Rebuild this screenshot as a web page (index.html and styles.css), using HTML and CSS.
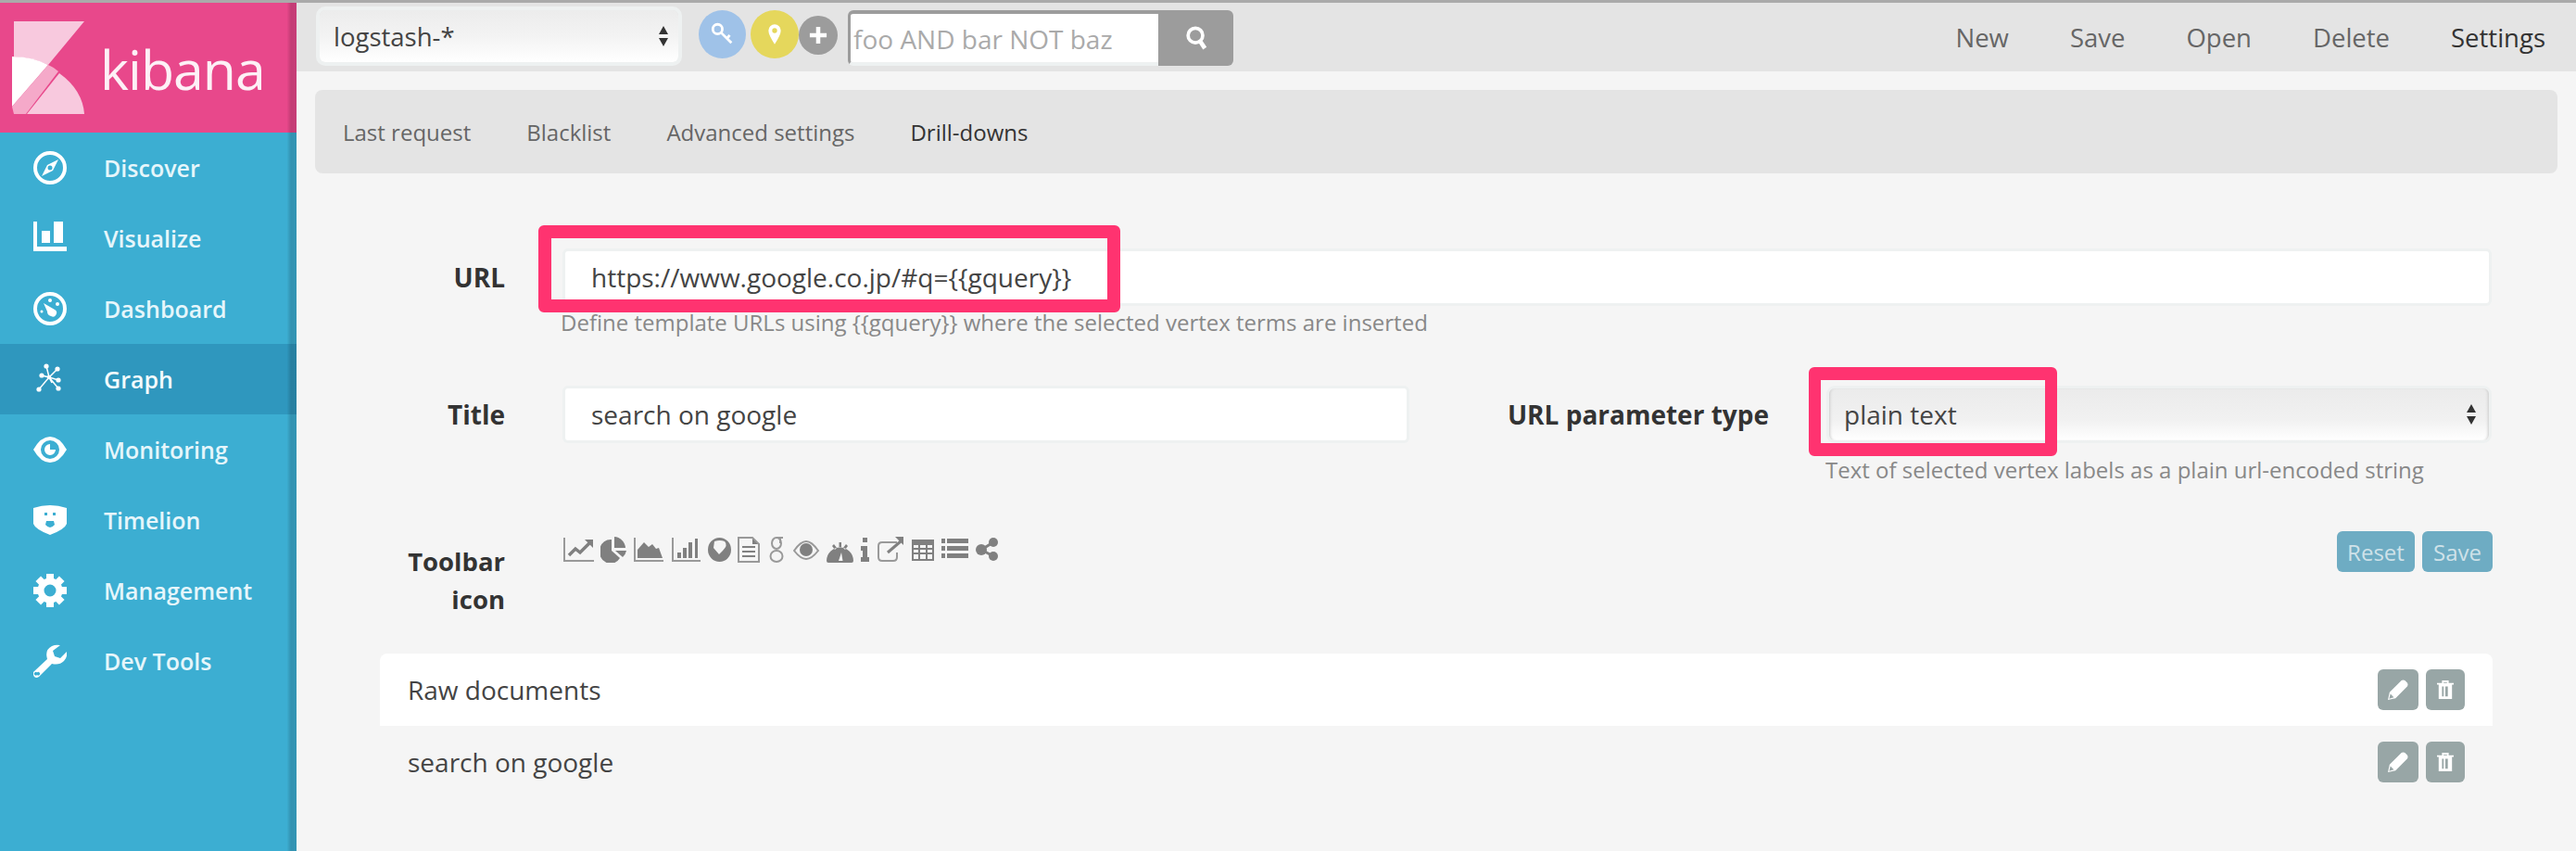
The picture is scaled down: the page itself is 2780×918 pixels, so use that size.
FILE: index.html
```html
<!DOCTYPE html>
<html lang="en">
<head>
<meta charset="utf-8">
<title>Kibana Graph</title>
<link rel="stylesheet" href="styles.css">
</head>
<body>
<div class="app">
  <aside class="sidebar">
    <div class="brand">
      <svg class="brand-logo" width="78" height="102" viewBox="0 0 78 102">
        <path fill="#f8c9de" d="M2 0H78L39 47Q22 39 2 38Z"/>
        <path fill="#fff" d="M0 38Q22 38 39 47L0 92Z"/>
        <path fill="#f5a9c9" d="M0 92L39 47Q46 50 50 54L15 100H2Z"/>
        <path fill="#f8c9de" d="M16 100L51 56Q76 74 78 100Z"/>
      </svg>
      <span class="brand-name">kibana</span>
    </div>
    <nav class="side-nav">
      <a class="side-item">
        <svg class="side-icon" viewBox="0 0 36 36"><circle cx="18" cy="18" r="16" fill="none" stroke="#fff" stroke-width="4"/><path fill="#fff" d="M27 9L21 21L9 27L15 15ZM18 15.500A2.500 2.500 0 1 0 18 20.500A2.500 2.500 0 1 0 18 15.500Z" fill-rule="evenodd"/></svg>
        <span>Discover</span>
      </a>
      <a class="side-item">
        <svg class="side-icon" viewBox="0 0 36 36"><path fill="#fff" d="M0 0H4V27H36V32H0Z"/><rect fill="#fff" x="9" y="10" width="9" height="13"/><rect fill="#fff" x="22" y="0" width="10" height="23"/></svg>
        <span>Visualize</span>
      </a>
      <a class="side-item">
        <svg class="side-icon" viewBox="0 0 36 36"><circle cx="18" cy="18" r="16" fill="none" stroke="#fff" stroke-width="4"/><path fill="#fff" d="M11 12L23 19A4 4 0 0 1 19 26A5 5 0 0 1 15 21Z"/><circle cx="18" cy="9" r="2" fill="#fff"/><circle cx="26" cy="13" r="2" fill="#fff"/><circle cx="9" cy="21" r="1.500" fill="#fff"/></svg>
        <span>Dashboard</span>
      </a>
      <a class="side-item is-active">
        <svg class="side-icon" viewBox="0 0 36 36"><g stroke="#fff" stroke-width="1.500" fill="none"><path d="M14 4L17 16L27 19M26 7L17 16L27 28M9 14L17 16L6 29M17 16L20 22"/></g><g fill="#fff"><circle cx="14" cy="4" r="2.600"/><circle cx="26" cy="7" r="2.600"/><circle cx="9" cy="14" r="2.600"/><circle cx="27" cy="19" r="2.600"/><circle cx="17" cy="16" r="2.200"/><circle cx="6" cy="29" r="2.600"/><circle cx="27" cy="28" r="2.600"/></g></svg>
        <span>Graph</span>
      </a>
      <a class="side-item">
        <svg class="side-icon" viewBox="0 0 36 36"><path fill="#fff" fill-rule="evenodd" d="M0 18Q8 4 18 4T36 18Q28 32 18 32T0 18ZM18 8A10 10 0 1 0 18 28A10 10 0 1 0 18 8Z"/><path fill="#fff" d="M18 12A6 6 0 1 0 24 18H18Z"/></svg>
        <span>Monitoring</span>
      </a>
      <a class="side-item">
        <svg class="side-icon" viewBox="0 0 36 36"><path fill="#fff" fill-rule="evenodd" d="M0 5Q18 -1 36 5V22Q34 28 18 34Q2 28 0 22ZM12 10H15V13H12ZM21 10H24V13H21ZM14 19H22L23 23Q18 29 13 23Z"/></svg>
        <span>Timelion</span>
      </a>
      <a class="side-item">
        <svg class="side-icon" viewBox="0 0 36 36"><circle cx="18" cy="18" r="10" fill="none" stroke="#fff" stroke-width="7"/><g fill="#fff"><rect x="14" y="0" width="8" height="7"/><rect x="14" y="29" width="8" height="7"/><rect x="0" y="14" width="7" height="8"/><rect x="29" y="14" width="7" height="8"/><rect x="14" y="0" width="8" height="7" transform="rotate(45 18 18)"/><rect x="14" y="29" width="8" height="7" transform="rotate(45 18 18)"/><rect x="0" y="14" width="7" height="8" transform="rotate(45 18 18)"/><rect x="29" y="14" width="7" height="8" transform="rotate(45 18 18)"/></g></svg>
        <span>Management</span>
      </a>
      <a class="side-item">
        <svg class="side-icon" viewBox="0 0 36 36"><path fill="#fff" fill-rule="evenodd" d="M0 30L15 16Q12 6 20 2Q24 0 29 1L21 7L23 13L29 15L36 8Q37 14 33 18Q28 23 20 21L6 35Q3 37 1 35Q-1 32 0 30ZM4 30.500A1.800 1.800 0 1 0 4 33A1.800 1.800 0 1 0 4 30.500Z"/></svg>
        <span>Dev Tools</span>
      </a>
    </nav>
  </aside>
  <main class="main">
    <header class="topbar">
      <div class="index-select">
        <span>logstash-*</span>
        <svg class="updown" width="12" height="24" viewBox="0 0 12 24"><path fill="#333" d="M6 1L11 10H1ZM6 23L1 14H11Z"/></svg>
      </div>
      <span class="round round-blue">
        <svg width="28" height="28" viewBox="0 0 30 30"><g fill="none" stroke="#fff" stroke-width="3"><circle cx="9" cy="9" r="5.500"/><path d="M13 13L25 25M20 20L23 16"/></g></svg>
      </span>
      <span class="round round-yellow">
        <svg width="16" height="24" viewBox="0 0 24 34"><path fill="#fff" fill-rule="evenodd" d="M12 1A10 10 0 0 1 22 11Q22 18 12 33Q2 18 2 11A10 10 0 0 1 12 1ZM12 7A4 4 0 1 0 12 15A4 4 0 1 0 12 7Z"/></svg>
      </span>
      <span class="round round-gray">
        <svg width="20" height="20" viewBox="0 0 22 22"><path fill="#fff" d="M8.500 1H13.500V8.500H21V13.500H13.500V21H8.500V13.500H1V8.500H8.500Z"/></svg>
      </span>
      <div class="search">
        <div class="search-input">foo AND bar NOT baz</div>
        <div class="search-btn">
          <svg width="28" height="26" viewBox="0 0 26 28"><circle cx="12" cy="11" r="8.500" fill="none" stroke="#fff" stroke-width="4"/><path d="M17 17L23 26" stroke="#fff" stroke-width="5"/></svg>
        </div>
      </div>
      <div class="top-actions">
        <a>New</a><a>Save</a><a>Open</a><a>Delete</a><a class="is-current">Settings</a>
      </div>
    </header>
    <div class="subnav">
      <a>Last request</a><a>Blacklist</a><a>Advanced settings</a><a class="is-current">Drill-downs</a>
    </div>
    <section class="form">
      <div class="row row-url">
        <label class="label">URL</label>
        <div class="field-wrap">
          <div class="control control-url">
            <span>https://www.google.co.jp/#q={{gquery}}</span>
            <i class="mark mark-url"></i>
          </div>
          <p class="help">Define template URLs using {{gquery}} where the selected vertex terms are inserted</p>
        </div>
      </div>
      <div class="row row-title">
        <label class="label">Title</label>
        <div class="control control-title"><span>search on google</span></div>
        <label class="label label-param">URL parameter type</label>
        <div class="field-wrap">
          <div class="select-box">
            <span>plain text</span>
            <svg class="updown" width="12" height="24" viewBox="0 0 12 24"><path fill="#333" d="M6 1L11 10H1ZM6 23L1 14H11Z"/></svg>
            <i class="mark mark-select"></i>
          </div>
          <p class="help help-select">Text of selected vertex labels as a plain url-encoded string</p>
        </div>
      </div>
      <div class="row row-toolbar">
        <label class="label label-toolbar">Toolbar icon</label>
        <div class="tool-icons">
          <svg width="40" height="28" viewBox="0 0 40 28"><path fill="none" stroke="#999" stroke-width="2" d="M1 1V26H33"/><path fill="none" stroke="#808080" stroke-width="3.500" d="M6 20L13 13L18 17L28 7"/><path fill="#808080" d="M23 3H32V12Z"/></svg>
          <svg width="36" height="28" viewBox="0 0 36 28"><path fill="#808080" d="M12 3V15L21 23A12 13 0 1 1 12 3Z"/><path fill="#808080" d="M15 0A13 13 0 0 1 27 12H15Z"/><path fill="#808080" d="M16 15H28A13 13 0 0 1 24 22Z"/></svg>
          <svg width="41" height="28" viewBox="0 0 41 28"><path fill="none" stroke="#999" stroke-width="2" d="M1 1V26H32"/><path fill="#808080" d="M4 23V14L11 6L16 11L20 8L24 13L27 12L31 23Z"/></svg>
          <svg width="39" height="28" viewBox="0 0 39 28"><path fill="none" stroke="#999" stroke-width="2" d="M1 1V26H31"/><path fill="#808080" d="M6 17H10V23H6ZM12 12H16V23H12ZM18 6H22V23H18ZM25 2H28V23H25Z"/></svg>
          <svg width="32" height="28" viewBox="0 0 32 28"><path fill="#808080" fill-rule="evenodd" d="M12.500 1A12.500 13 0 1 0 12.500 27A12.500 13 0 1 0 12.500 1ZM7 5Q13 3 18 5Q22 9 16 15L12 19L6 12Z"/></svg>
          <svg width="34" height="28" viewBox="0 0 34 28"><path fill="none" stroke="#999" stroke-width="2" d="M1 1H16L23 8V27H1Z"/><path fill="#808080" d="M5 10H19V12H5ZM5 15H19V17H5ZM5 20H19V22H5ZM16 2V8H22Z"/></svg>
          <svg width="26" height="28" viewBox="0 0 26 28"><g fill="none" stroke="#999" stroke-width="2"><ellipse cx="8" cy="7" rx="5" ry="6"/><ellipse cx="8" cy="21" rx="6.500" ry="6"/><path d="M8 1H15M12 1V7"/></g></svg>
          <svg width="36" height="28" viewBox="0 0 36 28"><path fill="none" stroke="#999" stroke-width="2" d="M1 15Q8 5 14 5T27 15Q20 24 14 24T1 15Z"/><circle cx="14" cy="14" r="7" fill="#808080"/></svg>
          <svg width="37" height="28" viewBox="0 0 37 28"><path fill="#808080" fill-rule="evenodd" d="M0 26A14.500 14.500 0 1 1 29 26Q29 28 27 28H2Q0 28 0 26ZM13.500 6H16V12H13.500ZM6 10L8 8L11 12L9 14ZM21 8L23 10L20 14L18 12ZM13 26L16 17L17.500 26Z"/></svg>
          <svg width="18" height="28" viewBox="0 0 18 28"><path fill="#808080" d="M2 1H7V6H2ZM0 10H7V22H9V27H0V22H2V15H0Z"/></svg>
          <svg width="36" height="28" viewBox="0 0 36 28"><path fill="none" stroke="#999" stroke-width="2" d="M21 6H5Q1 6 1 10V22Q1 26 5 26H17Q21 26 21 22V17"/><path fill="none" stroke="#808080" stroke-width="3" d="M11 17L25 5"/><path fill="#808080" d="M19 0H28V9Z"/></svg>
          <svg width="33" height="28" viewBox="0 0 33 28"><path fill="#808080" fill-rule="evenodd" d="M1 3H25V26H1ZM3 9V12H8V9ZM10 9V12H16V9ZM18 9V12H23V9ZM3 14V17H8V14ZM10 14V17H16V14ZM18 14V17H23V14ZM3 19V24H8V19ZM10 19V24H16V19ZM18 19V24H23V19Z"/></svg>
          <svg width="37" height="28" viewBox="0 0 37 28"><path fill="#808080" d="M0 2H4V7H0ZM6 2H29V7H6ZM0 10H4V15H0ZM6 10H29V15H6ZM0 18H4V23H0ZM6 18H29V23H6Z"/></svg>
          <svg width="24" height="28" viewBox="0 0 24 28"><g fill="#808080"><circle cx="19" cy="6" r="5"/><circle cx="19" cy="21" r="5"/><circle cx="6" cy="14" r="6"/></g><path stroke="#808080" stroke-width="3" d="M6 14L19 6M6 14L19 21"/></svg>
        </div>
        <div class="form-actions">
          <a class="btn btn-reset">Reset</a>
          <a class="btn btn-save">Save</a>
        </div>
      </div>
      <ul class="drill-list">
        <li class="drill-row is-selected">
          <span>Raw documents</span>
          <div class="drill-tools">
            <a class="tool-btn tool-edit"><svg width="22" height="22" viewBox="0 0 24 24"><path fill="#fff" fill-rule="evenodd" d="M0 24L2 15L16 1Q18 0 20 1L23 4Q24 6 23 8L9 22ZM3 17L1.500 22.500L7 21Z"/></svg></a>
            <a class="tool-btn tool-trash"><svg width="18" height="22" viewBox="0 0 20 24"><path fill="#fff" fill-rule="evenodd" d="M0 4H6V1H14V4H20V6H18V23H2V6H0ZM8 3V4H12V3ZM6 8V20H8V8ZM10 8V20H13V8Z"/></svg></a>
          </div>
        </li>
        <li class="drill-row">
          <span>search on google</span>
          <div class="drill-tools">
            <a class="tool-btn tool-edit"><svg width="22" height="22" viewBox="0 0 24 24"><path fill="#fff" fill-rule="evenodd" d="M0 24L2 15L16 1Q18 0 20 1L23 4Q24 6 23 8L9 22ZM3 17L1.500 22.500L7 21Z"/></svg></a>
            <a class="tool-btn tool-trash"><svg width="18" height="22" viewBox="0 0 20 24"><path fill="#fff" fill-rule="evenodd" d="M0 4H6V1H14V4H20V6H18V23H2V6H0ZM8 3V4H12V3ZM6 8V20H8V8ZM10 8V20H13V8Z"/></svg></a>
          </div>
        </li>
      </ul>
    </section>
  </main>
</div>
</body>
</html>
```
FILE: styles.css
```css
* { box-sizing: border-box; }
html, body { margin: 0; height: 100%; }
body {
  height: 918px;
  overflow: hidden;
  border-top: 3px solid #aaaaaa;
  background: #f5f5f5;
  color: #444;
  font-family: "Open Sans", "Liberation Sans", sans-serif;
  font-size: 28px;
}
.app { display: flex; height: 915px; }

/* sidebar */
.sidebar {
  position: relative;
  flex: 0 0 320px;
  background: #3caed2;
}
.sidebar::after {
  content: "";
  position: absolute;
  top: 0; right: 0; bottom: 0;
  width: 10px;
  background: linear-gradient(to right, rgba(0,0,0,.02), rgba(0,0,0,.16) 40%, rgba(0,0,0,.14));
}
.brand {
  display: flex;
  align-items: flex-start;
  height: 140px;
  padding: 20px 0 0 13px;
  background: #e8488b;
}
.brand-name {
  margin: 18px 0 0 17px;
  color: #fdf0f6;
  font-size: 59px;
  font-weight: 500;
  line-height: 66px;
  letter-spacing: -1px;
}
.side-item {
  display: flex;
  align-items: center;
  height: 76px;
  padding-left: 36px;
  color: #e6f6fb;
  font-size: 25px;
  font-weight: 600;
}
.side-item.is-active { background: #2f97be; color: #f4fbfd; }
.side-icon { width: 36px; height: 36px; margin-right: 40px; flex: none; }

/* top bar */
.main { flex: 1; min-width: 0; }
.topbar {
  display: flex;
  align-items: flex-start;
  height: 74px;
  padding-top: 8px;
  background: #e4e4e4;
}
.index-select {
  display: flex;
  align-items: center;
  justify-content: space-between;
  width: 387px;
  height: 56px;
  margin-left: 25px;
  padding: 0 10px 0 15px;
  border-radius: 6px;
  background: linear-gradient(to bottom, #ececec, #f3f3f3 50%, #fff);
  box-shadow: 0 0 0 4px #eef1f1;
  font-size: 27.500px;
  color: #444;
}
.round {
  display: flex;
  align-items: center;
  justify-content: center;
  flex: none;
  border-radius: 50%;
}
.round-blue { width: 51px; height: 52px; margin-left: 22px; background: #9fc2e8; }
.round-yellow { width: 52px; height: 52px; margin-left: 5px; background: #e5d75c; }
.round-gray { width: 42px; height: 42px; margin-top: 6px; background: #9c9c9c; }
.search { display: flex; height: 60px; margin-left: 11px; }
.search-input {
  width: 335px;
  padding-left: 3px;
  border-top: 4px solid #9c9c9c;
  border-left: 3px solid #9c9c9c;
  border-bottom: 4px solid #eef1f1;
  border-radius: 6px 0 0 6px;
  background: #fff;
  color: #aaa;
  line-height: 54px;
  white-space: nowrap;
}
.search-btn {
  display: flex;
  align-items: center;
  justify-content: center;
  width: 81px;
  border-radius: 0 6px 6px 0;
  background: #9c9c9c;
}
.top-actions {
  display: flex;
  gap: 66px;
  margin-left: auto;
  padding-right: 33px;
  font-size: 27.500px;
  line-height: 60px;
  color: #666;
}
.top-actions .is-current { color: #333; }

/* sub navigation */
.subnav {
  display: flex;
  align-items: center;
  gap: 60px;
  height: 90px;
  margin: 20px 20px 0;
  padding-left: 30px;
  border-radius: 8px;
  background: #e4e4e4;
  color: #666;
  font-size: 24px;
}
.subnav .is-current { color: #333; }

/* form */
.form { padding: 84px 90px 0 80px; }
.row { display: flex; }
.label {
  flex: 0 0 145px;
  margin-right: 65px;
  text-align: right;
  font-weight: 700;
  color: #333;
  font-size: 28px;
  line-height: 56px;
}
.field-wrap { flex: 1; min-width: 0; margin-right: 4px; }
.control {
  position: relative;
  height: 56px;
  padding-left: 28px;
  border-radius: 3px;
  background: #fff;
  box-shadow: 0 0 0 3px #eef1f1;
  line-height: 56px;
  color: #444;
}
.control-title { flex: 0 0 908px; }
.help {
  margin: 6px 0 0 -5px;
  color: #888;
  font-size: 24px;
  line-height: 30px;
}
.help-select { margin: 17px 0 0 -4px; }
.row-title { margin-top: 56px; }
.label-param { flex: 0 0 391px; }
.select-box {
  position: relative;
  display: flex;
  align-items: center;
  justify-content: space-between;
  height: 56px;
  padding: 0 13px 0 16px;
  border-radius: 6px;
  background: linear-gradient(to bottom, #ebebeb, #f1f1f1 60%, #fff);
  box-shadow: 0 0 0 3px #eef1f1, inset 3px 0 3px -2px #ccc, inset -3px 0 3px -2px #ccc;
  color: #444;
}
.mark {
  position: absolute;
  border-style: solid;
  border-color: #ff3370;
  border-radius: 6px;
  pointer-events: none;
}
.mark-url { left: -29px; top: -28px; width: 628px; height: 94px; border-width: 14px; }
.mark-select { left: -22px; top: -23px; width: 268px; height: 96px; border-width: 14px 13px; }

.row-toolbar { margin-top: 51px; align-items: flex-start; }
.label-toolbar { padding-top: 12px; line-height: 41px; font-size: 27.500px; }
.tool-icons { display: flex; margin: 6px 0 0 -2px; }
.tool-icons svg { flex: none; }
.form-actions { display: flex; gap: 8px; margin-left: auto; }
.btn {
  display: flex;
  align-items: center;
  justify-content: center;
  height: 44px;
  border-radius: 6px;
  background: #6eacc3;
  color: #cfe2e9;
  font-size: 24px;
}
.btn-reset { width: 84px; }
.btn-save { width: 76px; }

/* list */
.drill-list {
  margin: 38px 0 0 10px;
  padding: 0;
  list-style: none;
}
.drill-row {
  display: flex;
  align-items: center;
  justify-content: space-between;
  height: 78px;
  padding: 0 30px;
  color: #444;
}
.drill-row.is-selected { background: #fff; border-radius: 8px 8px 0 0; }
.drill-tools { display: flex; gap: 8px; }
.tool-btn {
  display: flex;
  align-items: center;
  justify-content: center;
  height: 44px;
  border-radius: 6px;
  background: #98a6a6;
}
.tool-edit { width: 44px; }
.tool-trash { width: 42px; }
```
